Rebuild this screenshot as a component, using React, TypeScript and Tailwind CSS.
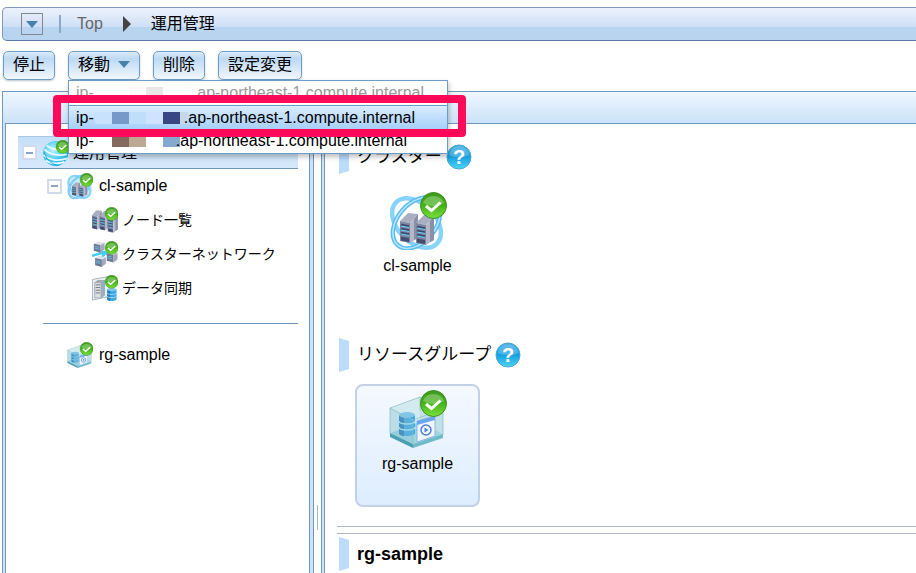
import React, { useId, useState } from "react";

type IconProps = { className?: string; small?: boolean };

const Badge = ({ id, small }: { id: string; small?: boolean }) => (
  <g transform={small ? "translate(-6 0) scale(1.120)" : undefined}>
    <defs>
      <linearGradient id={id + "ok"} x1="0" y1="0" x2="0" y2="1">
        <stop offset="0" stopColor="#3f9a1c" />
        <stop offset=".45" stopColor="#3fae14" />
        <stop offset="1" stopColor="#7be03c" />
      </linearGradient>
    </defs>
    <circle cx="44.5" cy="13.5" r="13" fill={`url(#${id}ok)`} stroke="#3c8f22" strokeWidth="1" />
    <path d="M34 11a11 10 0 0 1 21 0c-6 4-14 4-21 0z" fill="#fff" opacity=".28" />
    <path d="M37 14l5.500 4.500 9-8" fill="none" stroke="#fff" strokeWidth="3" />
  </g>
);

const Tower = ({ x, y }: { x: number; y: number }) => (
  <g transform={`translate(${x} ${y})`}>
    <path d="M0 8L8 0l10 1-8 9z" fill="#a9aec0" />
    <path d="M0 8l10 2v20L0 28z" fill="#7d85a2" />
    <path d="M10 10l8-9v24l-8 5z" fill="#b3b7c8" />
    <path d="M14 6l4-5v24l-4 2z" fill="#8a8fa6" />
    <path d="M1 12l8 1.500M1 16l8 1.500M1 20l8 1.500" stroke="#3f486b" strokeWidth="2.500" />
    <path d="M1 13l8 1.500M1 17l8 1.500M1 21l8 1.500" stroke="#6fd6f7" strokeWidth="1.200" />
    <path d="M1 23.500l8 1.500v4l-8-1.500z" fill="#444d70" />
  </g>
);

const Box = ({ x, y }: { x: number; y: number }) => (
  <g transform={`translate(${x} ${y})`}>
    <path d="M0 5l9-5 15 3-9 5z" fill="#dfe2ea" />
    <path d="M0 5l15 3v17L0 21z" fill="#6f7893" />
    <path d="M15 8l9-5v15l-9 7z" fill="#a3aabd" />
    <path d="M2 11l10 2M2 15l10 2" stroke="#63bfe2" strokeWidth="2" />
  </g>
);

const Cylinder = ({ x, y }: { x: number; y: number }) => (
  <g transform={`translate(${x} ${y})`}>
    <path d="M0 3v18c0 4 16 4 16 0V3z" fill="#3ca6e2" />
    <path d="M0 3v18c0 2 3 3 5 3V3z" fill="#2479b5" />
    <path d="M0 9c0 4 16 4 16 0M0 15c0 4 16 4 16 0" fill="none" stroke="#a9e2fa" strokeWidth="1.500" />
    <ellipse cx="8" cy="3" rx="8" ry="3" fill="#7fc6ea" />
  </g>
);

const ClusterIcon = ({ className, small }: IconProps) => {
  const id = useId();
  return (
    <svg viewBox="0 0 58 58" className={className} aria-hidden="true">
      {small && <rect x="1" y="5" width="54" height="52" rx="16" fill="#c8ecfd" />}
      <g fill="none" strokeWidth="4.500">
        <ellipse cx="27.500" cy="31" rx="29" ry="19" transform="rotate(46 27.500 31)" stroke="#86d3fb" />
        <ellipse cx="27.500" cy="31" rx="29" ry="19" transform="rotate(-50 27.500 31)" stroke="#5bbcf8" />
        <ellipse cx="27.500" cy="31" rx="29" ry="19" transform="rotate(-50 27.500 31)" stroke="#b7e8ff" strokeWidth="1.500" />
      </g>
      <Tower x={11} y={21} />
      <Tower x={27} y={23} />
      <Badge id={id} small={small} />
    </svg>
  );
};

const ResourceIcon = ({ className, small }: IconProps) => {
  const id = useId();
  return (
    <svg viewBox="0 0 58 58" className={className} aria-hidden="true">
      <path d="M1 18L31 7l23 12v27L24 58 1 44z" fill="#d3ebf0" />
      <path d="M31 7v26l23 11V19z" fill="#c1e1e8" />
      <path d="M1 43l30-11 23 12-30 10z" fill="#9dd5e1" />
      <path d="M1 43l23 11v4L1 47z" fill="#4a9fb1" />
      <path d="M24 54l30-10v4L24 58z" fill="#6fbac9" />
      <Cylinder x={10} y={22} />
      <path d="M1 18l23 12v24L1 43z" fill="#8fc4d0" opacity=".35" />
      <path d="M28 31l18-5v20l-18 6z" fill="#f0f5ff" stroke="#8fb6ea" />
      <path d="M28 31l18-5v4l-18 5z" fill="#6ba6ea" />
      <circle cx="37" cy="40" r="5" fill="none" stroke="#4b80d8" strokeWidth="1.500" />
      <path d="M35.500 37.500v5l4-2.500z" fill="#4b80d8" />
      <path d="M1 18L31 7l23 12M1 18v26M31 7v14M24 30v25M54 19v26M1 18l23 12 30-11" fill="none" stroke="#91c0c9" strokeWidth=".8" />
      <Badge id={id} small={small} />
    </svg>
  );
};

const NodesIcon = ({ className }: IconProps) => {
  const id = useId();
  return (
    <svg viewBox="0 0 58 58" className={className} aria-hidden="true">
      <g transform="translate(0 7) scale(1.200 1.450)"><Tower x={0} y={0} /></g>
      <g transform="translate(17 9) scale(1.200 1.450)"><Tower x={0} y={0} /></g>
      <g transform="translate(35 13) scale(1.250 1.480)"><Tower x={0} y={0} /></g>
      <Badge id={id} small />
    </svg>
  );
};

const NetworkIcon = ({ className }: IconProps) => {
  const id = useId();
  return (
    <svg viewBox="0 0 58 58" className={className} aria-hidden="true">
      <path d="M0 33l28-8 10 6M16 20l12 8-8 12" fill="none" stroke="#45cdf5" strokeWidth="6" />
      <Box x={4} y={1} />
      <Box x={33} y={23} />
      <Box x={7} y={33} />
      <Badge id={id} small />
    </svg>
  );
};

const SyncIcon = ({ className }: IconProps) => {
  const id = useId();
  return (
    <svg viewBox="0 0 58 58" className={className} aria-hidden="true">
      <path d="M1 10l44-8v44L1 56z" fill="#eef1f3" stroke="#a5adb5" strokeWidth="2" />
      <path d="M5 17l8-6h16v34l-8 7H5z" fill="#a3abb4" />
      <path d="M7 18h12v32H7z" fill="#dce1e5" />
      <path d="M8 22h10M8 28h10M8 34h10M8 40h10" stroke="#66717d" strokeWidth="2" />
      <path d="M24 15h5M24 23h5M24 31h5" stroke="#62c0e8" strokeWidth="3" />
      <g transform="translate(34 29) scale(1.300 1.200)"><Cylinder x={0} y={0} /></g>
      <Badge id={id} small />
    </svg>
  );
};

const GlobeIcon = ({ className }: IconProps) => {
  const id = useId();
  return (
    <svg viewBox="0 0 58 58" className={className} aria-hidden="true">
      <defs>
        <radialGradient id={id + "g"} cx=".4" cy=".35" r=".7">
          <stop offset="0" stopColor="#c4f1fd" />
          <stop offset=".55" stopColor="#50ccf1" />
          <stop offset="1" stopColor="#1ba9e0" />
        </radialGradient>
      </defs>
      <circle cx="28" cy="30" r="28" fill={`url(#${id}g)`} />
      <g fill="none" stroke="#e6f9ff" strokeWidth="4">
        <path d="M8 12c10 8 24 11 40 9M3 21c12 12 30 15 50 11M1 33c12 12 33 15 53 8M6 46c12 7 28 8 42 3" />
      </g>
      <path d="M2 26c6 18 16 28 34 31" fill="none" stroke="#1ea6da" strokeWidth="2" />
      <Badge id={id} small />
    </svg>
  );
};

const HelpButton = ({ label }: { label: string }) => {
  const id = useId();
  return (
    <button aria-label={label} className="cursor-pointer">
      <svg viewBox="0 0 26 26" className="size-[26px]">
        <defs>
          <linearGradient id={id} x1="0" y1="0" x2="0" y2="1">
            <stop offset="0" stopColor="#38aee4" />
            <stop offset=".5" stopColor="#189fe0" />
            <stop offset="1" stopColor="#4fd6fa" />
          </linearGradient>
        </defs>
        <circle cx="13" cy="13" r="12" fill={`url(#${id})`} stroke="#4aa8cf" />
        <path d="M3 11a10 9 0 0 1 20 0c-6 3-14 3-20 0z" fill="#fff" opacity=".2" />
        <text x="13" y="20" textAnchor="middle" fontSize="20" fontWeight="700" fill="#fff">?</text>
      </svg>
    </button>
  );
};

const Toggle = ({ label }: { label: string }) => (
  <button aria-label={label} className="flex size-[15px] shrink-0 items-center justify-center rounded-[1px] border-2 border-[#cfdaec] bg-white">
    <span className="h-[2px] w-[7px] bg-[#8ba3c7]" />
  </button>
);

const Arrow = () => (
  <svg viewBox="0 0 12 7" className="h-[7px] w-3" aria-hidden="true">
    <path d="M0 0h12L6 7z" fill="#4681ab" />
  </svg>
);

const toolButton =
  "flex h-[29px] items-center justify-center gap-2 rounded-[5px] border border-[#6d9dc5] bg-linear-to-b from-[#dcecfb] via-[#bdd9f4] via-25% to-[#f2f7fd] px-[9px] pb-[2px] shadow-[0_1px_2px_#b8c4d0]";

const hosts = [
  { id: 1, blocks: ["bg-white", "bg-white", "bg-[#fbfbfb]", "bg-[#e8e8e8]", "bg-white", "bg-[#fdfdfd]"], row: "text-[#999]" },
  { id: 2, blocks: ["bg-[#c8e2fd]", "bg-[#7799c9]", "bg-[#bfdefb]", "bg-[#cde3fe]", "bg-[#384783]"], last: "bg-[#c4d8e8]", row: "border-t border-[#6d9dc5] bg-linear-to-b from-[#dbedff] to-[#a5cffb]" },
  { id: 3, blocks: ["bg-white", "bg-[#846a5e]", "bg-[#bda893]", "bg-white", "bg-[#86aacf]"], row: "" },
];

const nodes = [
  { title: "ノード一覧", icon: NodesIcon },
  { title: "クラスターネットワーク", icon: NetworkIcon },
  { title: "データ同期", icon: SyncIcon },
];

const Heading = ({ title, help, className }: { title: string; help?: boolean; className?: string }) => (
  <div className="flex h-[34px] items-center">
    <svg viewBox="0 0 10 34" className="mr-2 h-[34px] w-[10px]" aria-hidden="true">
      <path d="M0 0l10 3v28L0 34z" fill="#b9dcff" />
    </svg>
    <h2 className={className}>{title}</h2>
    {help && <span className="ml-1 flex"><HelpButton label={title + "のヘルプ"} /></span>}
  </div>
);

const App = () => {
  const [open, setOpen] = useState(true);

  return (
    <div className="flex min-h-screen flex-col overflow-hidden bg-white pt-[7px] pl-[2px] font-['Liberation_Sans','Noto_Sans_CJK_JP',sans-serif] text-base leading-6 text-black">
      <nav className="flex h-[34px] items-center rounded-l-[5px] border border-r-0 border-[#8298bd] border-b-[#5a7cab] bg-linear-to-b from-[#edf2fd] via-[#cddff5] via-60% to-[#b9d4ef] to-60% pl-[18px]">
        <button aria-label="メニュー" className="flex size-[22px] items-center justify-center border border-[#84888e]">
          <Arrow />
        </button>
        <span className="mx-4 h-[18px] w-[2px] bg-[#8ba7c9]" />
        <a href="#top" className="text-[#666]">Top</a>
        <svg viewBox="0 0 8 16" className="mx-5 h-4 w-2" aria-hidden="true">
          <path d="M0 0l8 8-8 8z" fill="#444" />
        </svg>
        <span>運用管理</span>
      </nav>

      <div className="mt-[10px] flex items-end gap-[13px] pl-px">
        <button className={toolButton}>停止</button>
        <div className="relative z-20">
          <button onClick={() => setOpen(!open)} aria-expanded={open} className={toolButton}>
            移動 <Arrow />
          </button>
          {open && (
            <>
              <div role="menu" className="absolute top-full left-0 flex w-[380px] flex-col border border-[#6d9dc5] bg-white shadow-[1px_3px_5px_rgba(0,0,0,0.25)]">
                {hosts.map(host => (
                  <button role="menuitem" key={host.id} className={"flex h-6 items-center pl-[7px] text-left leading-5 " + host.row}>
                    <span>ip-</span>
                    <span className="ml-px flex h-3">
                      {host.blocks.map((color, i) => <span key={i} className={"w-[17px] " + color} />)}
                      {host.last && <span className={"w-2 " + host.last} />}
                    </span>
                    <span className="-ml-1">.ap-northeast-1.compute.internal</span>
                  </button>
                ))}
              </div>
              <div className="pointer-events-none absolute top-[44px] -left-[15px] h-[42px] w-[413px] rounded-[4px] border-8 border-[#ff0a5b]" />
            </>
          )}
        </div>
        <button className={toolButton}>削除</button>
        <button className={toolButton}>設定変更</button>
      </div>

      <main className="mt-[11px] flex flex-1">
        <aside className="flex w-[312px] shrink-0 flex-col border border-b-0 border-[#7199bd] bg-[#cfe3f8] pr-[3px] pl-[2px]">
          <div className="-mr-[3px] -ml-[2px] h-[31px] bg-linear-to-b from-[#eff7fe] to-[#cce2f8]" />
          <div className="flex-1 border border-b-0 border-[#7199bd] bg-white pt-3 pr-[11px] pl-3">
            <div className="flex h-[33px] items-center border-y border-t-[#a9c6e2] border-b-[#7199bd] bg-linear-to-b from-[#c6dff8] to-[#d6e9fb] pl-1">
              <Toggle label="運用管理を閉じる" />
              <GlobeIcon className="mr-1 ml-[6px] size-[26px]" />
              <span>運用管理</span>
            </div>
            <div className="flex h-[34px] items-center pl-[29px]">
              <Toggle label="cl-sampleを閉じる" />
              <ClusterIcon small className="mr-[6px] ml-[5px] size-[26px]" />
              <span>cl-sample</span>
            </div>
            {nodes.map(({ title, icon: Icon }) => (
              <div key={title} className="flex h-[34px] items-center pl-[74px] text-sm">
                <Icon className="mr-1 size-[26px]" />
                <span>{title}</span>
              </div>
            ))}
            <hr className="mt-[18px] mb-[14px] ml-[25px] border-[#7199bd]" />
            <div className="flex h-[34px] items-center pl-[49px]">
              <ResourceIcon small className="mr-[6px] size-[26px]" />
              <span>rg-sample</span>
            </div>
          </div>
        </aside>

        <div className="flex w-[7px] shrink-0 flex-col items-center justify-end pb-[43px]">
          <span className="h-[25px] w-px bg-[#aeb6c2]" />
        </div>

        <section className="flex min-w-0 flex-1 flex-col border-t border-l border-[#7199bd] bg-[#cfe3f8] pl-[2px]">
          <div className="-ml-[2px] h-[31px] bg-linear-to-b from-[#eff7fe] to-[#cce2f8]" />
          <div className="flex-1 border-t border-l border-[#7199bd] bg-white pt-4 pl-3">
            <div className="pl-[2px]">
              <Heading title="クラスター" help className="text-[17px]" />
              <button className="mt-3 mb-[29px] ml-4 flex h-[123px] w-[125px] flex-col items-center pt-[6px]">
                <ClusterIcon className="size-[58px]" />
                <span className="mt-1">cl-sample</span>
              </button>
              <Heading title="リソースグループ" help className="text-[17px]" />
              <button className="mt-3 ml-4 flex h-[123px] w-[125px] flex-col items-center rounded-lg border-2 border-[#c1d1e8] bg-linear-to-b from-[#f5f9ff] to-[#ddedfe] pt-1">
                <ResourceIcon className="size-[58px]" />
                <span className="mt-1">rg-sample</span>
              </button>
            </div>
            <div className="mt-[19px] h-2 border-y border-[#b0b8c6]" />
            <div className="mt-[3px] pl-[2px]">
              <Heading title="rg-sample" className="text-lg font-bold" />
            </div>
          </div>
        </section>
      </main>
    </div>
  );
};

export default App;
